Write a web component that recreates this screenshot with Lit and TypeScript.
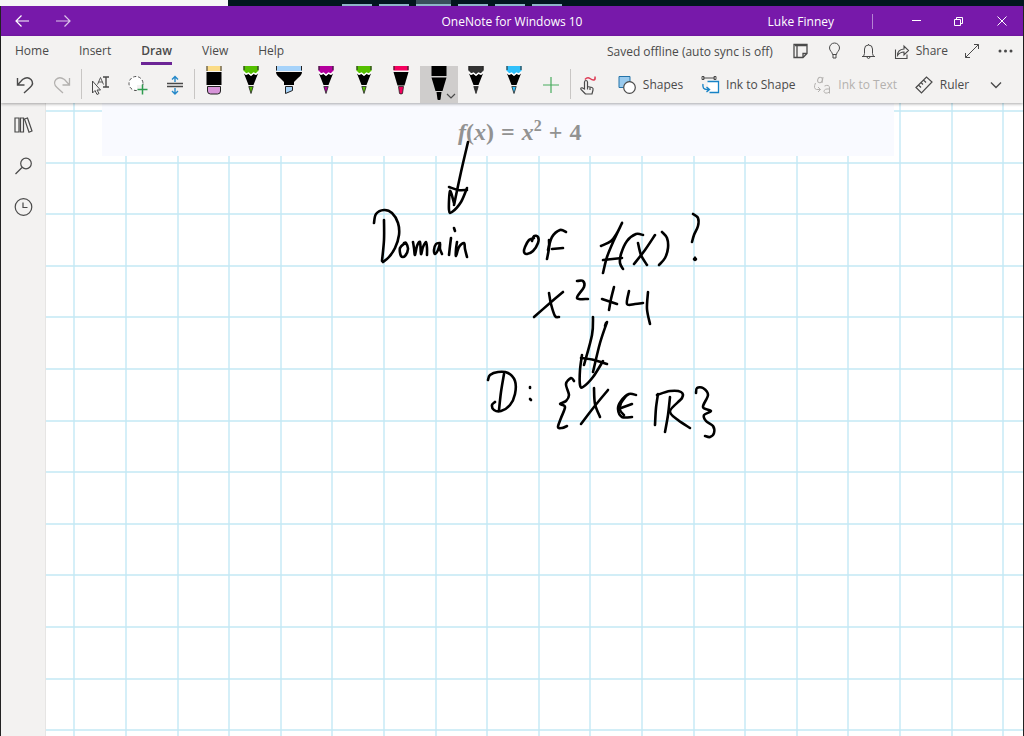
import { LitElement, html, svg, css } from "lit";
import { customElement } from "lit/decorators.js";
import { classMap } from "lit/directives/class-map.js";

type Point = [number, number];

// Ink strokes in page coordinates.
const strokes: Point[][] = [
  // arrow under the formula
  [[468, 142], [461, 172], [454, 205]],
  [[449, 187], [458, 190], [467, 190]],
  [[467, 188], [461, 202], [452, 212], [449, 210], [450, 191], [454, 203]],
  // "Domain"
  [[374, 223], [376, 214], [384, 210], [392, 213], [398, 223], [399, 235], [395, 248], [389, 257], [383, 262]],
  [[384, 220], [384, 240], [382, 261]],
  [[405, 243], [400, 248], [401, 256], [405, 256], [408, 249], [406, 243], [404, 243]],
  [[413, 242], [414, 248], [415, 255], [417, 246], [420, 242], [421, 254], [423, 247], [426, 242], [427, 248], [427, 255]],
  [[440, 243], [436, 244], [434, 250], [435, 254], [438, 250], [440, 244], [440, 249], [442, 254]],
  [[451, 238], [450, 246], [449, 255]],
  [[454, 228], [455, 231]],
  [[457, 242], [456, 249], [456, 256], [459, 247], [464, 243], [465, 249], [467, 257]],
  // "of"
  [[534, 238], [529, 240], [525, 247], [524, 252], [527, 254], [533, 251], [538, 243], [538, 237], [534, 236], [532, 241]],
  [[549, 240], [549, 248], [547, 259]],
  [[548, 250], [552, 237], [560, 230], [566, 232]],
  [[552, 249], [563, 248]],
  // "f(x)?"
  [[601, 246], [611, 241], [617, 233], [622, 223], [614, 240], [607, 257], [603, 273]],
  [[603, 260], [622, 258]],
  [[643, 235], [636, 234], [627, 241], [621, 254], [620, 263], [623, 269]],
  [[655, 235], [645, 250], [634, 264]],
  [[638, 243], [641, 255], [647, 265]],
  [[662, 232], [667, 238], [668, 248], [665, 258], [659, 265]],
  [[693, 214], [698, 218], [698, 226], [694, 235], [692, 242]],
  [[695, 258], [694, 259], [695, 260], [696, 259], [695, 258]],
  // "x^2 + 4"
  [[563, 292], [550, 303], [534, 317]],
  [[549, 293], [551, 304], [555, 316], [559, 317]],
  [[577, 281], [583, 281], [584, 287], [577, 298], [588, 299]],
  [[614, 287], [611, 299], [609, 310]],
  [[602, 299], [617, 304]],
  [[629, 291], [627, 304], [635, 304], [643, 303]],
  [[648, 292], [647, 309], [650, 324]],
  // double arrow
  [[593, 317], [592, 335], [584, 365]],
  [[607, 322], [600, 343], [593, 372]],
  [[606, 323], [605, 326]],
  [[581, 358], [594, 360], [607, 364]],
  [[582, 355], [580, 370], [580, 385], [583, 387], [593, 377], [603, 361]],
  // "D:"
  [[488, 380], [490, 375], [498, 372], [508, 373], [515, 381], [515, 394], [510, 405], [501, 411], [494, 410], [492, 405], [495, 402]],
  [[504, 374], [501, 392], [499, 410]],
  [[530, 387], [530, 388]],
  [[530, 399], [531, 400]],
  // "{x in R}"
  [[574, 381], [571, 378], [566, 384], [569, 395], [566, 401], [560, 404], [565, 407], [561, 418], [558, 427], [562, 428], [567, 426]],
  [[594, 388], [595, 404], [600, 417]],
  [[608, 390], [594, 407], [581, 424]],
  [[636, 395], [629, 394], [621, 401], [618, 409], [622, 417], [632, 417]],
  [[626, 396], [621, 403], [620, 410], [624, 415]],
  [[621, 408], [632, 404]],
  [[658, 394], [656, 408], [655, 425]],
  [[657, 395], [670, 391], [681, 392], [682, 398], [670, 411], [678, 420], [690, 428]],
  [[670, 397], [668, 415], [665, 432]],
  [[696, 393], [697, 388], [703, 388], [708, 395], [703, 407], [711, 411], [704, 415], [706, 421], [713, 426], [714, 433], [710, 437], [705, 436]],
];

// Catmull-Rom smoothing of a captured stroke.
function smooth(points: Point[]): string {
  let d = `M${points[0][0]} ${points[0][1]}`;
  for (let i = 0; i < points.length - 1; i++) {
    const a = points[Math.max(i - 1, 0)];
    const b = points[i];
    const c = points[i + 1];
    const e = points[Math.min(i + 2, points.length - 1)];
    d += `C${b[0] + (c[0] - a[0]) / 6} ${b[1] + (c[1] - a[1]) / 6} ${c[0] - (e[0] - b[0]) / 6} ${c[1] - (e[1] - b[1]) / 6} ${c[0]} ${c[1]}`;
  }
  return d;
}

type PenKind = "eraser" | "pencil" | "highlighter" | "marker";
interface Pen {
  kind: PenKind;
  color: string;
  label: string;
  selected?: boolean;
}

const pens: Pen[] = [
  { kind: "eraser", color: "#d794d9", label: "Eraser" },
  { kind: "pencil", color: "#55c000", label: "Green pencil" },
  { kind: "highlighter", color: "#a6d3fa", label: "Blue highlighter" },
  { kind: "pencil", color: "#b4009e", label: "Purple pencil" },
  { kind: "pencil", color: "#55c000", label: "Green pencil 2" },
  { kind: "marker", color: "#f5005e", label: "Pink pen" },
  { kind: "marker", color: "#000000", label: "Black pen", selected: true },
  { kind: "pencil", color: "#333333", label: "Black pencil" },
  { kind: "pencil", color: "#31c1fb", label: "Blue pencil" },
];

function penArt(pen: Pen) {
  const c = pen.color;
  switch (pen.kind) {
    case "eraser":
      return svg`<path d="M6.500 0h15v5h-15z" fill="#fbdc86"/><path d="M7 0v5M21 0v5" stroke="#333"/>
        <path d="M6.500 6h15v13h-15z"/><path d="M7.500 20.500h13v4.500q0 3-3 3h-7q-3 0-3-3z" fill=${c} stroke="#222"/>`;
    case "pencil":
      return svg`<path d="M6.500 0h15v5l-2.500 3-2.500-1-2.500 2-2.500-2-2.500 1-2.500-3z" fill=${c}/>
        <path d="M7 0v4M21 0v4" stroke="#222"/>
        <path d="M7 7.500l2 1.500 2.500-1 2.500 2 2.500-2 2.500 1 2-1.500-4.500 11.500h-5z"/>
        <path d="M6.500 5.500l2.500 2.500 2.500-1 2.500 2 2.500-2 2.500 1 2.500-2.500" fill="none" stroke="#fff" stroke-width="1.300"/>
        <path d="M11.800 20.500h4.400L14 27.500z" fill=${c} stroke="#222" stroke-width=".8"/>`;
    case "highlighter":
      return svg`<path d="M1 0h26v5H1z" fill=${c}/><path d="M1.500 0v4.500M26.500 0v4.500" stroke="#222"/>
        <path d="M1 6h26q0 3-4 6l-4 4v3h-10v-3l-4-4q-4-3-4-6z"/>
        <path d="M10.500 20.500h7v4l-7 3z" fill=${c} stroke="#222"/>`;
    case "marker":
      return svg`<path d="M6.500 0h15v4.500h-15z" fill=${c}/><path d="M7 0v4M21 0v4" stroke="#222"/>
        <path d="M6.500 6h15l-4 13.500h-7z"/>
        <path d="M11.500 20.500h5l-1 7q-1.500 1-3 0z" fill=${c} stroke="#222" stroke-width=".8"/>`;
  }
}

const icon = (body: unknown, size = 20) =>
  html`<svg class="icon" width=${size} height=${size} viewBox="0 0 ${size} ${size}" aria-hidden="true">${body}</svg>`;

const glyphs = {
  back: svg`<path d="M18 10H5M10.500 4.500L5 10l5.500 5.500" stroke-width="1.200"/>`,
  forward: svg`<path d="M4 10h14M12.500 4.500l5.500 5.500-5.500 5.500" stroke-width="1.200"/>`,
  minimize: svg`<path d="M6 9.500h9" />`,
  restore: svg`<path d="M5.500 8.500h6v6h-6zM7.500 8.500v-2h6v6h-2" />`,
  close: svg`<path d="M5.500 5.500l9 9M14.500 5.500l-9 9" />`,
  note: svg`<path d="M3 3.500h13v9l-4 4H3zM6 3.500v13M12 16.500v-4h4M4 4.500h11.500" stroke-width="1.300"/>`,
  bulb: svg`<path d="M7.500 13.500c0-2.500-3-3.500-3-6.500a5 5 0 0 1 10 0c0 3-3 4-3 6.500zM8 13.500v3.500h3v-3.500" />`,
  bell: svg`<path d="M3 15.500h13M4.500 15.500l1-3V8a4 4 0 0 1 8 0v4.500l1 3M8 15.500q0 2 1.500 2t1.500-2M9.500 3v1" />`,
  share: svg`<path d="M2.500 8.500v9h11.500v-4M4.500 14.500q0-6 6.500-6.500V5l4.500 4.500-4.500 4.500v-3q-4 0-6.500 3.500z" stroke-width="1.100"/>`,
  expand: svg`<path d="M3.500 16.500l13-13M12 3.500h4.500V8M3.500 12v4.500H8" />`,
  more: svg`<g fill="currentColor" stroke="none"><circle cx="4" cy="10" r="1.500"/><circle cx="9.500" cy="10" r="1.500"/><circle cx="15" cy="10" r="1.500"/></g>`,
  undo: svg`<path d="M2.500 3v7h7M2.500 10l5-5.500q5-3.500 8.500 0 3.500 4-1 8L9 18" stroke-width="1.400"/>`,
  redo: svg`<path d="M17.500 3v7h-7M17.500 10l-5-5.500q-5-3.500-8.500 0-3.500 4 1 8L11 18" stroke-width="1.300"/>`,
  select: svg`<path d="M2.500 7v12l2.500-2.500 2 4 2-1-2-3.500h3.500z"/><path d="M7.500 10.500l3-7 3 7M8.500 8h4" stroke-width=".9"/><path d="M13 3h6M13 13h6M16 3v10" stroke-width="1.400"/>`,
  lasso: svg`<circle cx="9" cy="9.500" r="7" fill="#fff" stroke-dasharray="3 2"/><path d="M10 11h10v8H10z" fill="#f3f2f1" stroke="none"/><path d="M15.500 10.500v10M10.500 15.500h10" stroke="#2e9b4f" stroke-width="1.500"/>`,
  space: svg`<path d="M3 9.500h16M3 12.500h16" stroke-width="1.400"/><path d="M11 8V3M8 5.500l3-3 3 3M11 14v6M8 17l3 3 3-3" stroke="#2488c9" stroke-width="1.400"/>`,
  plus: svg`<path d="M10 2v16M2 10h16" stroke="#49ab5e" stroke-width="1.200"/>`,
  touch: svg`<path d="M7.500 20l-4.500-4.500q-.800-2 1.200-1.700l2.300 1.200V8q.200-1.500 1.500-1.500T9.500 8v4.500l4.500 1q1.500.500 1 2.500l-1 4zM9.500 12.500v3M12 13v3" stroke-width="1.200"/><path d="M8 4.500q2.500-3 5-1t4 1.500 1-3.500" transform="translate(-1 1)" stroke="#dd3b55" stroke-width="1.500"/>`,
  shapes: svg`<path d="M2 1.500h11v11H2z" fill="#9acbee" stroke="#2574a9"/><circle cx="12.500" cy="12.500" r="5.800" fill="#fff" stroke-width="1.200"/>`,
  inkShape: svg`<path d="M7.500 6.500h11v11h-9" fill="#fff" stroke="#1683c6" stroke-width="1.300"/><path d="M3 3h12M2 1.500h2v3H2zM14 1.500h2v3h-2z"/><path d="M3 9q-1 5.500 4 5.500h2M6.500 12l3 2.500-3 2.500" stroke="#1683c6" stroke-width="1.400"/>`,
  inkText: svg`<ellipse cx="8" cy="5" rx="2.300" ry="2.800" transform="rotate(20 8 5)"/><path d="M11 2l-1 6"/><path d="M12.500 11q5-2 5 2v5.500M17.500 14q-5.500-.5-5.500 2.500 1 3 5.500.5"/><path d="M3.500 8q-2.500 5.500 1 6.500h4M6 12l2.500 2.500L6 17"/>`,
  ruler: svg`<path d="M2 12.500L12.500 2 18 7 7.500 18zM4.500 10l2.500 2.500M7 7.500l2 2M9.500 5l2.500 2.500" stroke-width="1.200"/>`,
  chevron: svg`<path d="M5 7.500l5 5 5-5" stroke-width="1.400"/>`,
  books: svg`<path d="M2 3h4v14H2zM7.500 3h3v14h-3zM11.500 4l3-1 4.500 13-3 1.200z" stroke-width="1.200"/>`,
  search: svg`<circle cx="13" cy="7.500" r="5.300" stroke-width="1.200"/><path d="M9 11.500l-6.500 6.500" stroke-width="1.200"/>`,
  clock: svg`<circle cx="10.500" cy="10" r="8.300" stroke-width="1.200"/><path d="M10 5.500v5h4.500" stroke-width="1.200"/>`,
};

@customElement("app-root")
export class AppRoot extends LitElement {
  static styles = css`
    :host {
      display: flex;
      flex-direction: column;
      height: 100vh;
      overflow: hidden;
      box-sizing: border-box;
      font: 12px/16px "Open Sans", "Noto Sans", sans-serif;
      color: #4a4a4a;
      background: #fff;
    }
    button {
      display: flex;
      align-items: center;
      justify-content: center;
      margin: 0;
      padding: 0;
      border: 0;
      background: none;
      color: inherit;
      font: inherit;
      white-space: nowrap;
    }
    .icon {
      flex: none;
      fill: none;
      stroke: currentColor;
      overflow: visible;
    }
    .desktop {
      flex: none;
      display: flex;
      height: 6px;
      background: #02171e;
    }
    .behind {
      width: 228px;
      margin-right: 114px;
      background: #f6f6f6;
    }
    .tasks {
      display: flex;
      gap: 7px;
    }
    .task {
      width: 30px;
      box-sizing: border-box;
      border-bottom: 2px solid #8fb6c8;
    }
    .task.current {
      width: 35px;
      background: #38505a;
    }
    .window {
      flex: 1;
      min-height: 0;
      display: flex;
      flex-direction: column;
      border: solid #222;
      border-width: 0 1px;
    }
    .title {
      flex: none;
      height: 30px;
      box-sizing: border-box;
      padding-top: 2px;
      display: grid;
      grid-template-columns: 1fr auto 1fr;
      align-items: center;
      background: #7719aa;
      color: #fff;
    }
    .history {
      display: flex;
      gap: 21px;
      padding: 0 0 3px 10px;
    }
    .next {
      opacity: 0.75;
    }
    .account {
      display: flex;
      align-items: center;
      justify-content: flex-end;
      padding-right: 11px;
    }
    .split {
      width: 1px;
      height: 15px;
      margin: 0 33px 2px 38px;
      background: #b583d3;
    }
    .controls {
      display: flex;
      gap: 23px;
      padding-bottom: 2px;
    }
    .ribbon {
      flex: none;
      position: relative;
      z-index: 1;
      background: #f3f2f1;
      box-shadow: 0 1px 3px #0005;
    }
    .tabs {
      display: flex;
      justify-content: space-between;
      height: 30px;
      padding: 0 7px 0 14px;
    }
    .tablist {
      display: flex;
      gap: 30px;
    }
    .tab {
      box-sizing: border-box;
      border-bottom: 3px solid transparent;
      border-top: 4px solid transparent;
      height: 29px;
    }
    .tab.active {
      border-bottom-color: #6c2596;
      font-weight: 600;
    }
    .status {
      display: flex;
      align-items: center;
      gap: 14px;
    }
    .status .saved {
      margin: 2px 4px 0 0;
    }
    .share {
      gap: 3px;
    }
    .tools {
      display: flex;
      height: 37px;
    }
    .group {
      flex: none;
      display: flex;
      position: relative;
    }
    .group > button {
      flex: 1;
    }
    .edit {
      width: 75px;
      padding-left: 5px;
    }
    .picks {
      width: 112px;
    }
    .pens {
      width: 375px;
    }
    .rule {
      width: 1px;
      height: 30px;
      margin-top: 3px;
      background: #c8c6c4;
    }
    .group .pen {
      align-items: flex-start;
    }
    .group .pen.selected {
      background: #cfcdcc;
      position: relative;
    }
    .pen svg {
      overflow: visible;
    }
    .pen .pick {
      position: absolute;
      right: -1px;
      bottom: -5px;
    }
    .convert {
      flex: 1;
      display: flex;
      align-items: center;
      justify-content: space-between;
      padding: 1px 17px 0 7px;
    }
    .convert button {
      gap: 6px;
    }
    .disabled {
      color: #b3b1af;
    }
    .body {
      flex: 1;
      min-height: 0;
      display: flex;
    }
    .rail {
      flex: none;
      width: 45px;
      box-sizing: border-box;
      display: flex;
      flex-direction: column;
      align-items: center;
      gap: 21px;
      padding-top: 12px;
      background: #f3f2f1;
      border-right: 1px solid #e6e5e4;
    }
    .page {
      flex: 1;
      min-width: 0;
      position: relative;
      overflow: hidden;
      background: #fff;
    }
    .layer {
      position: absolute;
      inset: 0;
      width: 100%;
      height: 100%;
    }
    .grid {
      stroke: #c3e8f5;
      stroke-width: 1.4;
    }
    .ink {
      fill: none;
      stroke: #000;
      stroke-width: 2.6;
      stroke-linecap: round;
      stroke-linejoin: round;
    }
    .clip {
      position: relative;
      box-sizing: border-box;
      max-width: 792px;
      height: 53px;
      margin: 0 56px;
      padding: 15px 0 0 356px;
      background: #f9faff;
      color: #929292;
      font: bold 24px/28px "Liberation Serif", serif;
      white-space: nowrap;
    }
    .formula {
      display: flex;
      gap: 7px;
    }
    .formula sup {
      font-size: 16px;
      line-height: 0;
    }
  `;

  private renderTitle() {
    return html`<header class="title">
      <div class="history">
        <button aria-label="Back">${icon(glyphs.back)}</button>
        <button class="next" aria-label="Forward">${icon(glyphs.forward)}</button>
      </div>
      <span>OneNote for Windows 10</span>
      <div class="account">
        <span>Luke Finney</span>
        <span class="split"></span>
        <div class="controls">
          <button aria-label="Minimize">${icon(glyphs.minimize)}</button>
          <button aria-label="Restore">${icon(glyphs.restore)}</button>
          <button aria-label="Close">${icon(glyphs.close)}</button>
        </div>
      </div>
    </header>`;
  }

  private renderPen(pen: Pen) {
    return html`<button class=${classMap({ pen: true, selected: !!pen.selected })} aria-label=${pen.label}>
      ${pen.selected
        ? html`<svg width="28" height="35" viewBox="0 0 28 35">
              <path d="M6.500 0h15v10h-15zM6.500 11.500h15l-4 13.500h-7zM11.500 26h5l-1 7.500q-1.500 1-3 0z" />
            </svg>
            <span class="pick">${icon(svg`<path d="M4 6l4 4 4-4" stroke-width="1.200"/>`, 16)}</span>`
        : html`<svg width="28" height="29" viewBox="0 0 28 29">${penArt(pen)}</svg>`}
    </button>`;
  }

  private renderRibbon() {
    const tabs = ["Home", "Insert", "Draw", "View", "Help"];
    return html`<div class="ribbon">
      <div class="tabs">
        <nav class="tablist">
          ${tabs.map((t) => html`<button class=${classMap({ tab: true, active: t === "Draw" })}>${t}</button>`)}
        </nav>
        <div class="status">
          <span class="saved">Saved offline (auto sync is off)</span>
          <button aria-label="Feed">${icon(glyphs.note)}</button>
          <button aria-label="Tips">${icon(glyphs.bulb)}</button>
          <button aria-label="Notifications">${icon(glyphs.bell)}</button>
          <button class="share">${icon(glyphs.share)}Share</button>
          <button aria-label="Full screen">${icon(glyphs.expand)}</button>
          <button aria-label="More">${icon(glyphs.more)}</button>
        </div>
      </div>
      <div class="tools">
        <div class="group edit">
          <button aria-label="Undo">${icon(glyphs.undo)}</button>
          <button class="disabled" aria-label="Redo">${icon(glyphs.redo)}</button>
        </div>
        <span class="rule"></span>
        <div class="group picks">
          <button aria-label="Select objects or type text">${icon(glyphs.select, 22)}</button>
          <button aria-label="Lasso select">${icon(glyphs.lasso, 22)}</button>
          <button aria-label="Insert space">${icon(glyphs.space, 22)}</button>
        </div>
        <span class="rule"></span>
        <div class="group pens">
          ${pens.map((p) => this.renderPen(p))}
          <button aria-label="Add pen">${icon(glyphs.plus)}</button>
        </div>
        <span class="rule"></span>
        <div class="convert">
          <button aria-label="Draw with touch">${icon(glyphs.touch, 22)}</button>
          <button>${icon(glyphs.shapes)}Shapes</button>
          <button>${icon(glyphs.inkShape)}Ink to Shape</button>
          <button class="disabled">${icon(glyphs.inkText)}Ink to Text</button>
          <button>${icon(glyphs.ruler)}Ruler</button>
          <button aria-label="More tools">${icon(glyphs.chevron)}</button>
        </div>
      </div>
    </div>`;
  }

  private renderPage() {
    const at = (start: number, i: number) => Math.round(start + i * 51.6);
    const lines = Array.from({ length: 60 }, (_, i) => i);
    return html`<main class="page">
      <svg class="layer grid" aria-hidden="true">
        ${lines.map(
          (i) => svg`<line x1=${at(28.4, i)} x2=${at(28.4, i)} y1="0" y2="100%"/>
            <line y1=${at(8, i)} y2=${at(8, i)} x1="0" x2="100%"/>`,
        )}
      </svg>
      <div class="clip">
        <div class="formula">
          <span><i>f</i>(<i>x</i>)</span><span>=</span><span><i>x</i><sup>2</sup></span><span>+</span><span>4</span>
        </div>
      </div>
      <svg class="layer ink" role="img" aria-label="Domain of f(x)? x² + 4, D: {x ∈ ℝ}">
        <g transform="translate(-46 -103)">${strokes.map((s) => svg`<path d=${smooth(s)}/>`)}</g>
      </svg>
    </main>`;
  }

  render() {
    return html`
      <div class="desktop">
        <div class="behind"></div>
        <div class="tasks">
          ${[0, 1, 2, 3, 4, 5].map((i) => html`<span class=${classMap({ task: true, current: i === 2 })}></span>`)}
        </div>
      </div>
      <div class="window">
        ${this.renderTitle()} ${this.renderRibbon()}
        <div class="body">
          <nav class="rail">
            <button aria-label="Notebooks">${icon(glyphs.books)}</button>
            <button aria-label="Search">${icon(glyphs.search)}</button>
            <button aria-label="Recent notes">${icon(glyphs.clock)}</button>
          </nav>
          ${this.renderPage()}
        </div>
      </div>
    `;
  }
}
